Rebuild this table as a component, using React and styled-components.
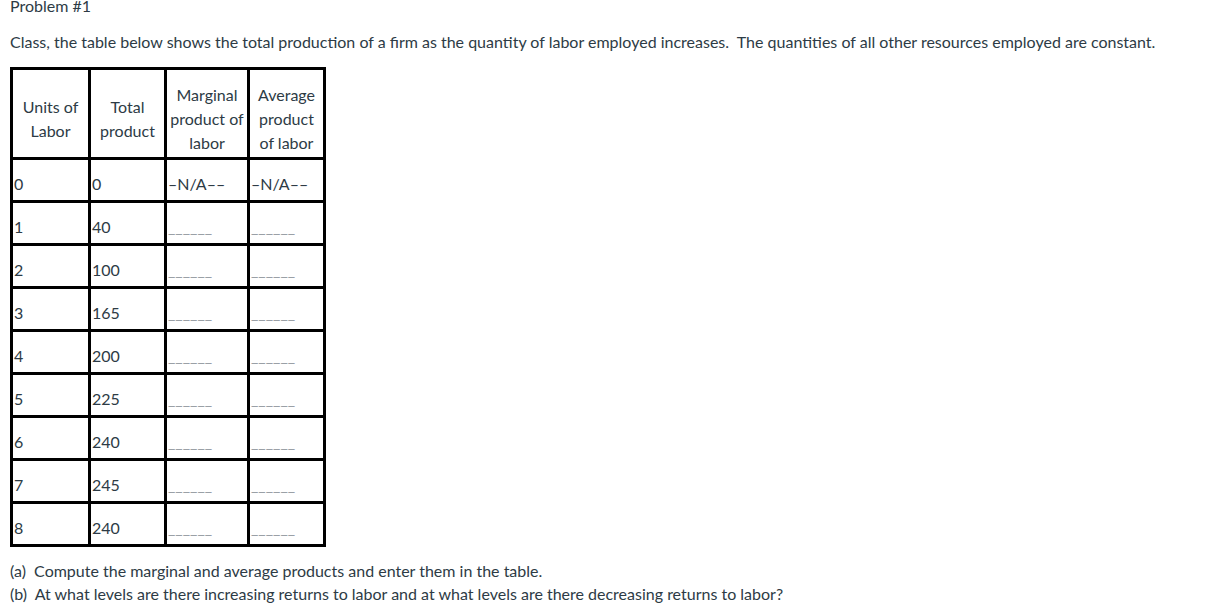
import React from "react"
import styled, { createGlobalStyle } from "styled-components"

const rows = [
  { units: "0", total: "0", marginal: "–N/A––", average: "–N/A––" },
  { units: "1", total: "40" },
  { units: "2", total: "100" },
  { units: "3", total: "165" },
  { units: "4", total: "200" },
  { units: "5", total: "225" },
  { units: "6", total: "240" },
  { units: "7", total: "245" },
  { units: "8", total: "240" },
]

const App = () => {
  return (
    <Page>
      <GlobalStyle />
      <Title>Problem #1</Title>
      <Intro>
        Class, the table below shows the total production of a firm as the quantity of labor
        employed increases.&nbsp; The quantities of all other resources employed are constant.
      </Intro>
      <Table>
        <colgroup>
          <col style={{ width: 78 }} />
          <col style={{ width: 76 }} />
          <col style={{ width: 83 }} />
          <col style={{ width: 76 }} />
        </colgroup>
        <thead>
          <tr>
            <HeadCell>Units of<br />Labor</HeadCell>
            <HeadCell>Total<br />product</HeadCell>
            <HeadCell>Marginal<br />product of<br />labor</HeadCell>
            <HeadCell>Average<br />product<br />of labor</HeadCell>
          </tr>
        </thead>
        <tbody>
          {rows.map(row => (
            <tr key={row.units}>
              <DataCell>{row.units}</DataCell>
              <DataCell>{row.total}</DataCell>
              <DataCell>{row.marginal || <Blank>______</Blank>}</DataCell>
              <DataCell>{row.average || <Blank>______</Blank>}</DataCell>
            </tr>
          ))}
        </tbody>
      </Table>
      <Question>(a)&nbsp; Compute the marginal and average products and enter them in the table.</Question>
      <Question>(b)&nbsp; At what levels are there increasing returns to labor and at what levels are there decreasing returns to labor?</Question>
    </Page>
  )
}

const GlobalStyle = createGlobalStyle`
  body {
    margin: 0;
    background: #fff;
    color: #2d3b45;
    font-family: Lato, "Liberation Sans", sans-serif;
    font-size: 16px;
  }
`

const Page = styled.main`
  padding: 0 10px;
`

const Title = styled.p`
  margin: -4px 0 0;
  line-height: 20px;
`

const Intro = styled.p`
  margin: 16px 0 15px;
  line-height: 20px;
`

const Table = styled.table`
  border-collapse: collapse;
  table-layout: fixed;
  width: 316px;
  border: 3px solid #000;
  margin-bottom: 12px;
`

const HeadCell = styled.th`
  border: 3px solid #000;
  height: 76px;
  padding: 11px 1px 0;
  font-weight: normal;
  text-align: center;
  vertical-align: middle;
  line-height: 24px;
`

const DataCell = styled.td`
  border: 3px solid #000;
  height: 20px;
  padding: 14px 1px 6px;
  text-align: left;
  vertical-align: top;
  line-height: 20px;
`

const Blank = styled.span`
  color: #9aa0a6;
`

const Question = styled.p`
  margin: 0;
  line-height: 23px;
`

export default App
